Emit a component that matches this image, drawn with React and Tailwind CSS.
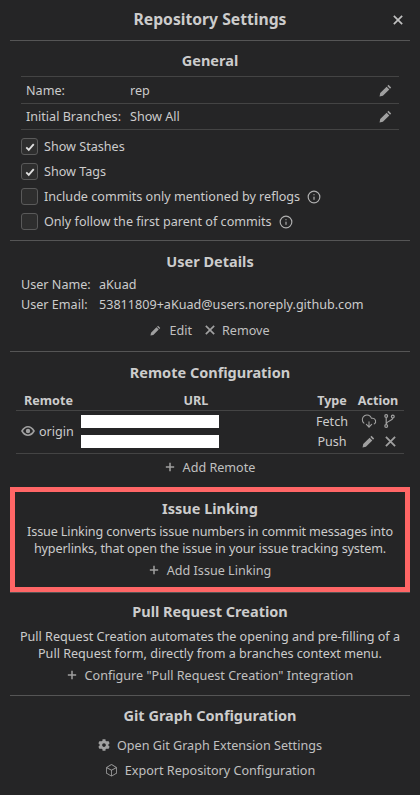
import React from 'react';
import { GoPackage } from 'react-icons/go';
import { FaCog } from 'react-icons/fa';
import { CloudDownload, Info } from 'lucide-react';

const Pencil = ({ className }) => (
  <svg viewBox="0 0 14 14" className={className} fill="currentColor">
    <path d="M10.2 0.9 L13.1 3.8 L11.9 5 L9 2.1 Z M8.2 2.9 L11.1 5.8 L4.2 12.7 L0.6 13.4 L1.3 9.8 Z" />
  </svg>
);

const Cross = ({ className }) => (
  <svg viewBox="0 0 12 12" className={className} fill="none" stroke="currentColor" strokeWidth="2">
    <path d="M1 1 L11 11 M11 1 L1 11" />
  </svg>
);

const Plus = ({ className }) => (
  <svg viewBox="0 0 12 12" className={className} fill="none" stroke="currentColor" strokeWidth="1.8">
    <path d="M6 1 V11 M1 6 H11" />
  </svg>
);

const Eye = ({ className }) => (
  <svg viewBox="0 0 14 14" className={className} fill="none" stroke="currentColor">
    <path strokeWidth="1.6" d="M1 7 C3 3.6 5 2.8 7 2.8 C9 2.8 11 3.6 13 7 C11 10.4 9 11.2 7 11.2 C5 11.2 3 10.4 1 7 Z" />
    <circle cx="7" cy="7" r="2.2" fill="currentColor" stroke="none" />
  </svg>
);

const Branch = ({ className }) => (
  <svg viewBox="0 0 11 14" className={className} fill="none" stroke="currentColor" strokeWidth="1.2">
    <circle cx="2.2" cy="2" r="1.4" />
    <circle cx="2.2" cy="12" r="1.4" />
    <circle cx="8.8" cy="2.6" r="1.4" />
    <path d="M2.2 3.4 V10.6 M8.8 4 C8.8 7 3 6.5 2.2 10" />
  </svg>
);

function Heading({ children }) {
  return <h3 className="h-[20px] leading-[20px] text-center text-[14.5px] font-bold text-[#cccccc]">{children}</h3>;
}

function Action({ icon, children, gap = 'gap-[8px]', className = '' }) {
  return (
    <div className={`flex items-center justify-center h-[20px] text-[#c0c0c0] ${gap} ${className}`}>
      {icon}
      <span>{children}</span>
    </div>
  );
}

function CheckRow({ checked, info, children }) {
  return (
    <div className="flex items-center h-[25px] pl-[11px]">
      <div className="w-[17px] h-[17px] border border-[#5a5a5a] rounded-[3px] bg-[#2e2e2e] flex items-center justify-center">
        {checked && (
          <svg viewBox="0 0 12 12" className="w-[10px] h-[10px] text-[#e0e0e0]" fill="none" stroke="currentColor" strokeWidth="2.2">
            <path d="M1.5 6.5 L4.5 9.5 L10.5 2.5" />
          </svg>
        )}
      </div>
      <span className="ml-[6px]">{children}</span>
      {info && <Info className="w-[14px] h-[14px] ml-[7px] text-[#b0b0b0]" strokeWidth={2} />}
    </div>
  );
}

export default function App() {
  return (
    <div className="w-[420px] h-[795px] overflow-hidden bg-[#252526] text-[#cccccc] text-[12.6px] leading-[17px] px-[10px] font-['Noto_Sans',sans-serif]">
      {/* Title */}
      <div className="relative h-[41px] border-b border-[#555555] flex items-center justify-center pb-[1px]">
        <h2 className="text-[15.7px] font-bold">Repository Settings</h2>
        <Cross className="absolute right-[7px] top-[15px] w-[10px] h-[10px] text-[#c0c0c0]" />
      </div>

      {/* General */}
      <section className="h-[200px] border-b border-[#555555] pt-[9px]">
        <Heading>General</Heading>
        <div className="mx-[11px] mt-[6px] border-t border-[#444444]">
          <div className="flex items-center h-[27px] border-b border-[#444444] pl-[5px] pr-[7px]">
            <span className="w-[104px]">Name:</span>
            <span className="flex-1">rep</span>
            <Pencil className="w-[13px] h-[13px] text-[#a0a0a0]" />
          </div>
          <div className="flex items-center h-[26px] border-b border-[#444444] pl-[5px] pr-[7px]">
            <span className="w-[104px]">Initial Branches:</span>
            <span className="flex-1">Show All</span>
            <Pencil className="w-[13px] h-[13px] text-[#a0a0a0]" />
          </div>
        </div>
        <div className="mt-[4px]">
          <CheckRow checked>Show Stashes</CheckRow>
          <CheckRow checked>Show Tags</CheckRow>
          <CheckRow info>Include commits only mentioned by reflogs</CheckRow>
          <CheckRow info>Only follow the first parent of commits</CheckRow>
        </div>
      </section>

      {/* User Details */}
      <section className="h-[111px] border-b border-[#555555] pt-[10px]">
        <Heading>User Details</Heading>
        <div className="mt-[3px] pl-[11px]">
          <div className="flex items-center h-[20px]">
            <span className="w-[78px]">User Name:</span>
            <span>aKuad</span>
          </div>
          <div className="flex items-center h-[20px]">
            <span className="w-[78px]">User Email:</span>
            <span>53811809+aKuad@users.noreply.github.com</span>
          </div>
        </div>
        <div className="flex justify-center gap-[13px] mt-[6px]">
          <Action icon={<Pencil className="w-[11px] h-[11px] text-[#a0a0a0]" />}>Edit</Action>
          <Action gap="gap-[7px]" icon={<Cross className="w-[10px] h-[10px] text-[#a0a0a0]" />}>Remove</Action>
        </div>
      </section>

      {/* Remote Configuration */}
      <section className="h-[135px] pt-[10px]">
        <Heading>Remote Configuration</Heading>
        <div className="mx-[6px] mt-[8px]">
          <div className="grid grid-cols-[65px_230px_42px_50px] items-center h-[21px] border-b border-[#444444] font-bold">
            <span className="text-center">Remote</span>
            <span className="text-center">URL</span>
            <span className="text-center">Type</span>
            <span className="text-center">Action</span>
          </div>
          <div className="grid grid-cols-[65px_230px_42px_50px] items-center h-[43px] pb-[2px] border-b border-[#444444]">
            <div className="flex items-center pl-[5px] gap-[4px]">
              <Eye className="w-[14px] h-[14px] text-[#a0a0a0]" />
              <span>origin</span>
            </div>
            <div className="flex flex-col gap-[7px]">
              <div className="w-[138px] h-[13px] bg-white" />
              <div className="w-[138px] h-[13px] bg-white" />
            </div>
            <div className="flex flex-col gap-[3px] text-center">
              <span>Fetch</span>
              <span>Push</span>
            </div>
            <div className="flex flex-col gap-[6px] pl-[8px]">
              <div className="flex items-center gap-[7px] h-[14px]">
                <CloudDownload className="w-[16px] h-[16px] text-[#a0a0a0]" strokeWidth={1.6} />
                <Branch className="w-[11px] h-[14px] text-[#a0a0a0]" />
              </div>
              <div className="flex items-center gap-[10px] h-[14px] pl-[1px]">
                <Pencil className="w-[13px] h-[13px] text-[#a0a0a0]" />
                <Cross className="w-[11px] h-[11px] text-[#a0a0a0]" />
              </div>
            </div>
          </div>
        </div>
        <Action className="mt-[3px]" icon={<Plus className="w-[10px] h-[10px] text-[#a0a0a0]" />}>Add Remote</Action>
      </section>

      {/* Issue Linking */}
      <section className="h-[105px] border-[5px] border-[#ff6666] pt-[6px] text-center">
        <Heading>Issue Linking</Heading>
        <p className="mt-[6px] leading-[16.5px] whitespace-nowrap tracking-[-0.12px]">
          Issue Linking converts issue numbers in commit messages into<br />
          hyperlinks, that open the issue in your issue tracking system.
        </p>
        <Action className="mt-[3px]" icon={<Plus className="w-[10px] h-[10px] text-[#a0a0a0]" />}>Add Issue Linking</Action>
      </section>

      {/* Pull Request Creation */}
      <section className="h-[104px] border-t border-b border-[#555555] pt-[8px] text-center">
        <Heading>Pull Request Creation</Heading>
        <p className="mt-[7px] leading-[17px] whitespace-nowrap">
          Pull Request Creation automates the opening and pre-filling of a<br />
          Pull Request form, directly from a branches context menu.
        </p>
        <Action className="mt-[3px]" icon={<Plus className="w-[10px] h-[10px] text-[#a0a0a0]" />}>Configure "Pull Request Creation" Integration</Action>
      </section>

      {/* Git Graph Configuration */}
      <section className="pt-[9px]">
        <Heading>Git Graph Configuration</Heading>
        <Action gap="gap-[7px]" className="mt-[10px]" icon={<FaCog className="w-[12px] h-[12px] text-[#a0a0a0]" />}>Open Git Graph Extension Settings</Action>
        <Action gap="gap-[7px]" className="mt-[5px]" icon={<GoPackage className="w-[13px] h-[13px] text-[#a0a0a0]" />}>Export Repository Configuration</Action>
      </section>
    </div>
  );
}
